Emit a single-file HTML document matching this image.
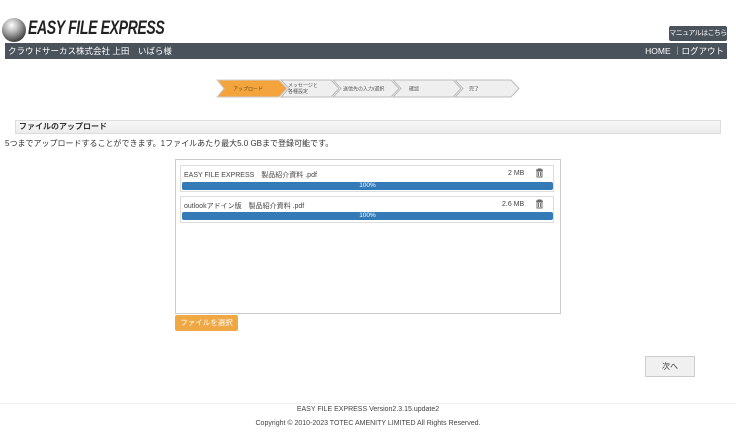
<!DOCTYPE html><html><head><meta charset="utf-8"><style>
*{margin:0;padding:0;box-sizing:border-box}
body{width:736px;height:438px;background:#fff;font-family:"Liberation Sans","Noto Sans CJK JP",sans-serif;color:#333;position:relative;overflow:hidden}
.a{position:absolute}
</style></head><body>
<div class="a" style="left:2px;top:18px;width:24px;height:24px;border-radius:50%;background:radial-gradient(circle at 40% 30%,#fff 0,#bbb 30%,#333 80%,#111 100%)"></div>
<div class="a" style="left:28px;top:18px;font:italic bold 19px 'Liberation Sans',sans-serif;color:#222;letter-spacing:-0.5px;transform:scaleX(0.74);transform-origin:left">EASY FILE EXPRESS</div>
<div class="a" style="left:669px;top:26px;width:58px;height:15px;background:#4a525b;border-radius:2px;color:#fff;font-size:7px;letter-spacing:-0.6px;line-height:15px;text-align:center;white-space:nowrap;overflow:hidden">マニュアルはこちら</div>
<div class="a" style="left:5px;top:43px;width:722px;height:16px;background:#4a525b;color:#fff;font-size:8.5px;line-height:16px;padding-left:3px">クラウドサーカス株式会社 上田　いばら様<span style="position:absolute;right:3px">HOME ｜ログアウト</span></div>
<svg class="a" style="left:215px;top:79px" width="308" height="20">
<polygon points="2,1 64,1 72,9.5 64,18 2,18 9,9.5" fill="#f3a43c" stroke="#ccc"/>
<polygon points="66,1 116,1 124,9.5 116,18 66,18 74,9.5" fill="#efefef" stroke="#bbb"/>
<polygon points="118,1 176,1 184,9.5 176,18 118,18 126,9.5" fill="#efefef" stroke="#bbb"/>
<polygon points="178,1 238,1 246,9.5 238,18 178,18 186,9.5" fill="#efefef" stroke="#bbb"/>
<polygon points="240,1 296,1 304,9.5 296,18 240,18 248,9.5" fill="#efefef" stroke="#bbb"/>
<g font-size="5" fill="#555" font-family="Liberation Sans,Noto Sans CJK JP,sans-serif">
<text x="18" y="11.5" fill="#6a4a1a">アップロード</text>
<text x="73" y="8">メッセージと</text><text x="73" y="14">各種設定</text>
<text x="128" y="11.5">送信先の入力/選択</text>
<text x="194" y="11.5">確認</text>
<text x="254" y="11.5">完了</text></g></svg>
<div class="a" style="left:15px;top:120px;width:706px;height:14px;background:linear-gradient(#f8f8f8,#ececec);border:1px solid #ddd;font-size:8px;font-weight:bold;line-height:12px;padding-left:3px">ファイルのアップロード</div>
<div class="a" style="left:5px;top:138px;font-size:8px;line-height:12px">5つまでアップロードすることができます。1ファイルあたり最大5.0 GBまで登録可能です。</div>
<div class="a" style="left:175px;top:159px;width:386px;height:155px;border:1px solid #ccc;background:#fff"></div>
<div class="a" style="left:180px;top:165px;width:374px;height:27px;border:1px solid #ddd"></div>
<div class="a" style="left:184px;top:170px;font-size:7px;color:#444">EASY FILE EXPRESS　製品紹介資料 .pdf</div>
<div class="a" style="left:508px;top:170px;font-size:7px;color:#444">2 MB</div>
<svg class="a" style="left:535px;top:168px" width="9" height="10"><path d="M1 2h7M3 2V1h3v1M2 3h5v6H2zM3.5 4v4M5.5 4v4" stroke="#666" fill="none" stroke-width="0.9"/></svg>
<div class="a" style="left:182px;top:182px;width:371px;height:8px;background:#337ab7;border-radius:2px;color:#fff;font-size:6.5px;line-height:8px;text-align:center">100%</div>
<div class="a" style="left:180px;top:196px;width:374px;height:27px;border:1px solid #ddd"></div>
<div class="a" style="left:184px;top:201px;font-size:7px;color:#444">outlookアドイン版　製品紹介資料 .pdf</div>
<div class="a" style="left:502px;top:201px;font-size:7px;color:#444">2.6 MB</div>
<svg class="a" style="left:535px;top:199px" width="9" height="10"><path d="M1 2h7M3 2V1h3v1M2 3h5v6H2zM3.5 4v4M5.5 4v4" stroke="#666" fill="none" stroke-width="0.9"/></svg>
<div class="a" style="left:182px;top:212px;width:371px;height:8px;background:#337ab7;border-radius:2px;color:#fff;font-size:6.5px;line-height:8px;text-align:center">100%</div>
<div class="a" style="left:175px;top:315px;width:63px;height:16px;background:#f0a844;border-radius:2px;color:#fff;font-size:7.5px;line-height:16px;text-align:center">ファイルを選択</div>
<div class="a" style="left:645px;top:356px;width:50px;height:21px;background:#f0f0f0;border:1px solid #ccc;font-size:8px;line-height:19px;text-align:center">次へ</div>
<div class="a" style="left:0;top:403px;width:736px;height:1px;background:#eee"></div>
<div class="a" style="left:0;top:406px;width:736px;text-align:center;font-size:7px;color:#444">EASY FILE EXPRESS Version2.3.15.update2</div>
<div class="a" style="left:0;top:420px;width:736px;text-align:center;font-size:7px;color:#444">Copyright © 2010-2023 TOTEC AMENITY LIMITED All Rights Reserved.</div>
</body></html>
